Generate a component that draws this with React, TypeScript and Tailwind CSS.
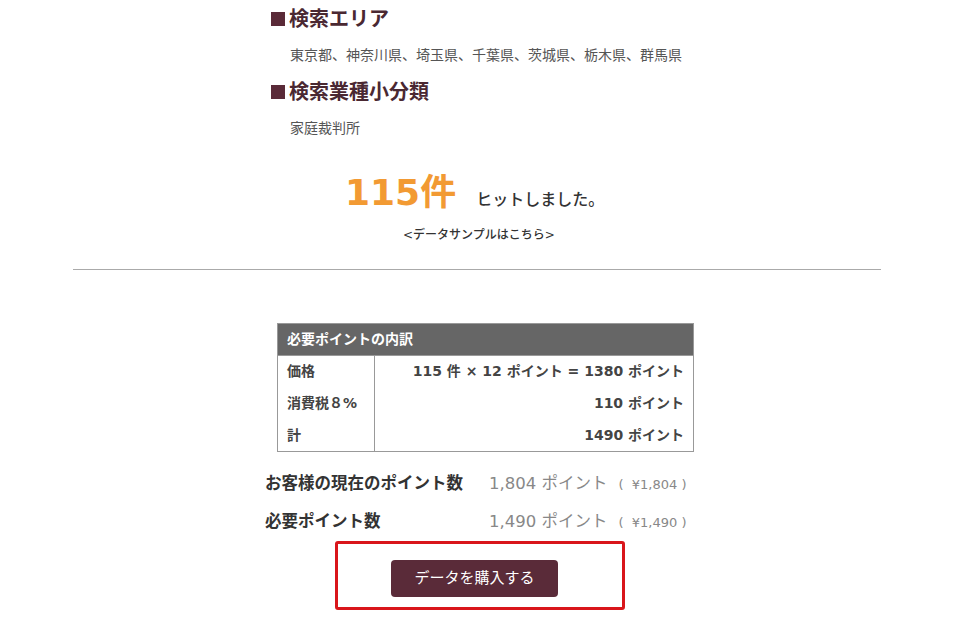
import React from "react";

const jp = { fontFamily: '"DejaVu Sans", "Noto Sans CJK JP", "Noto Sans", sans-serif' };

export default function App() {
  return (
    <div className="w-[960px] h-[635px] bg-white overflow-hidden" style={jp}>
      <div className="w-[808px] ml-[73px] flex flex-col">
        <div className="pl-[197px] flex flex-col">
          <h2 className="mt-[5px] h-[28px] leading-[28px] text-[20px] font-bold text-[#4a2832] flex items-center">
            <span className="inline-block w-[14px] h-[14px] bg-[#5a2a38] mr-[4px] ml-[1px]"></span>
            検索エリア
          </h2>
          <p className="mt-[12px] pl-[20px] h-[20px] leading-[20px] text-[14px] text-[#555]">
            東京都、神奈川県、埼玉県、千葉県、茨城県、栃木県、群馬県
          </p>
          <h2 className="mt-[13px] h-[28px] leading-[28px] text-[20px] font-bold text-[#4a2832] flex items-center">
            <span className="inline-block w-[14px] h-[14px] bg-[#5a2a38] mr-[4px] ml-[1px]"></span>
            検索業種小分類
          </h2>
          <p className="mt-[12px] pl-[20px] h-[20px] leading-[20px] text-[14px] text-[#555]">
            家庭裁判所
          </p>
        </div>
        <div className="mt-[31px] pl-[272px] flex items-baseline h-[48px]">
          <span className="text-[36px] leading-[48px] font-bold text-[#f29a33]">115件</span>
          <span className="ml-[20px] text-[16px] font-medium text-[#333]">ヒットしました。</span>
        </div>
        <div className="mt-[8px] pl-[330px] h-[20px] leading-[20px] text-[12px] font-medium text-[#333]">
          &lt;データサンプルはこちら&gt;
        </div>
        <div className="mt-[24px] h-[1px] bg-[#aaaaaa]"></div>
        <div className="mt-[53px] pl-[204px]">
          <table className="w-[417px] border border-[#999] border-collapse text-[14px] font-bold text-[#444]">
            <thead>
              <tr className="bg-[#666666] h-[32px]">
                <th colSpan={2} className="text-left pl-[9px] text-white text-[14px] font-bold border border-[#999]">
                  必要ポイントの内訳
                </th>
              </tr>
            </thead>
            <tbody>
              <tr className="h-[32px]">
                <td className="w-[97px] pl-[9px] border-r border-[#999]">価格</td>
                <td className="text-right pr-[9px]">115 件 × 12 ポイント = 1380 ポイント</td>
              </tr>
              <tr className="h-[32px]">
                <td className="pl-[9px] border-r border-[#999]">消費税８%</td>
                <td className="text-right pr-[9px]">110 ポイント</td>
              </tr>
              <tr className="h-[32px]">
                <td className="pl-[9px] border-r border-[#999]">計</td>
                <td className="text-right pr-[9px]">1490 ポイント</td>
              </tr>
            </tbody>
          </table>
        </div>
        <div className="mt-[18px] pl-[192px] flex flex-col gap-[10px]">
          <div className="flex items-baseline h-[28px] leading-[28px]">
            <span className="w-[224px] text-[16.5px] font-bold text-[#333]">お客様の現在のポイント数</span>
            <span className="text-[16.5px] text-[#888]">1,804 ポイント</span>
            <span className="ml-[11px] text-[13px] text-[#888] whitespace-pre">(  ¥1,804 )</span>
          </div>
          <div className="flex items-baseline h-[28px] leading-[28px]">
            <span className="w-[224px] text-[16.5px] font-bold text-[#333]">必要ポイント数</span>
            <span className="text-[16.5px] text-[#888]">1,490 ポイント</span>
            <span className="ml-[11px] text-[13px] text-[#888] whitespace-pre">(  ¥1,490 )</span>
          </div>
        </div>
        <div className="mt-[5px] ml-[262px] w-[290px] h-[69px] border-[3px] border-[#d9161b] rounded-[3px] flex items-start">
          <button className="mt-[16px] ml-[53px] w-[167px] h-[37px] bg-[#5a2b39] rounded-[4px] text-white text-[15px]">
            データを購入する
          </button>
        </div>
      </div>
    </div>
  );
}
